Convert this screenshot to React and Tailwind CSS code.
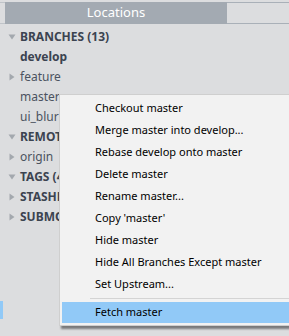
import React from "react";

const rows = [
  { label: "BRANCHES (13)", head: true, arrow: "down" },
  { label: "develop", bold: true },
  { label: "feature", arrow: "right" },
  { label: "master" },
  { label: "ui_blur" },
  { label: "REMOTES (1)", head: true, arrow: "down" },
  { label: "origin", arrow: "right" },
  { label: "TAGS (4)", head: true, arrow: "down" },
  { label: "STASHES", head: true, arrow: "right" },
  { label: "SUBMODULES", head: true, arrow: "right" },
];

const items = [
  "Checkout master",
  "Merge master into develop...",
  "Rebase develop onto master",
  "Delete master",
  "Rename master...",
  "Copy 'master'",
  "Hide master",
  "Hide All Branches Except master",
  "Set Upstream...",
];

function Arrow({ dir }) {
  if (dir === "down")
    return (
      <svg width="8" height="6" viewBox="0 0 8 6" className="shrink-0">
        <path d="M0.5 0.5 L7.5 0.5 L4 5.5 Z" fill="#a3a8ae" />
      </svg>
    );
  if (dir === "right")
    return (
      <svg width="6" height="8" viewBox="0 0 6 8" className="shrink-0 ml-[1px]">
        <path d="M0.5 0.5 L5.5 4 L0.5 7.5 Z" fill="#a3a8ae" />
      </svg>
    );
  return null;
}

function Sidebar() {
  return (
    <div className="flex flex-col pt-[3px]">
      {rows.map((r, i) => (
        <div
          key={r.label}
          className={
            "h-[20px] flex items-center overflow-hidden " +
            (i >= 3 ? "w-[59px]" : "w-full")
          }
        >
          <div className="w-[20px] shrink-0 pl-[8px] flex items-center">
            <Arrow dir={r.arrow} />
          </div>
          <span
            className={
              "text-[12px] whitespace-nowrap " +
              (r.head || r.bold ? "font-bold text-[#3b4350]" : "text-[#4b5360]")
            }
          >
            {r.label}
          </span>
        </div>
      ))}
    </div>
  );
}

function ContextMenu() {
  return (
    <div className="absolute left-[59px] top-[94px] w-[250px] bg-[#f2f2f2] border border-[#cfcfcf] shadow-[2px_3px_2px_rgba(0,0,0,0.45)] pt-[2px] pb-[2px] pl-[2px] text-[11px] text-black">
      {items.map((t) => (
        <div key={t} className="h-[22px] flex items-center pl-[33px] whitespace-nowrap">
          {t}
        </div>
      ))}
      <div className="h-[7px] flex items-center pl-[28px]">
        <div className="h-px w-full bg-[#d4d4d4]" />
      </div>
      <div className="h-[21px] flex items-center pl-[33px] bg-[#91c9f7] whitespace-nowrap">
        Fetch master
      </div>
    </div>
  );
}

export default function App() {
  return (
    <div
      className="relative w-[289px] h-[336px] overflow-hidden bg-[#dcdddf]"
      style={{ fontFamily: '"Noto Sans", "Open Sans", sans-serif' }}
    >
      <div className="flex h-[24px] pt-[2px]">
        <div className="w-[5px] border-y border-[#c0c4c9]" />
        <div className="w-[222px] bg-[#a3aab2] flex items-center justify-center text-white text-[13px]">
          Locations
        </div>
        <div className="flex-1 border-y border-[#a9b0b8] bg-[#dcdddf]" />
      </div>
      <Sidebar />
      <div className="absolute left-0 top-[301px] w-[3px] h-[18px] bg-[#91c9f7]" />
      <ContextMenu />
    </div>
  );
}
